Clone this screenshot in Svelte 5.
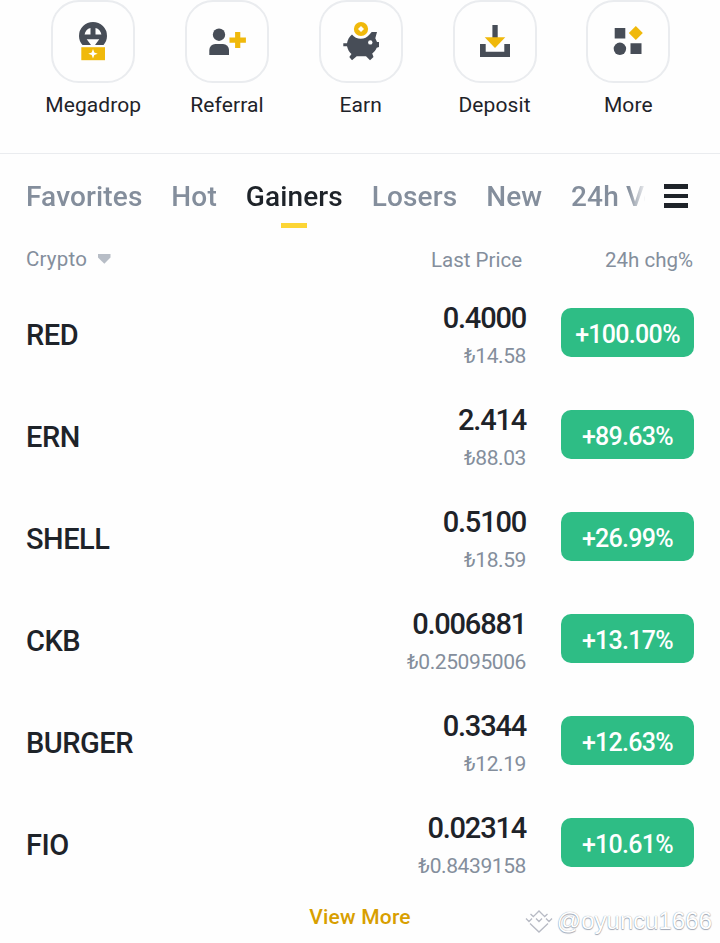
<script lang="ts">
  const shortcuts = ['Megadrop', 'Referral', 'Earn', 'Deposit', 'More'];

  const tabs = ['Favorites', 'Hot', 'Gainers', 'Losers', 'New', '24h Vo'];
  let activeTab = $state('Gainers');

  const coins = [
    { name: 'RED', price: '0.4000', fiat: '₺14.58', change: '+100.00%' },
    { name: 'ERN', price: '2.414', fiat: '₺88.03', change: '+89.63%' },
    { name: 'SHELL', price: '0.5100', fiat: '₺18.59', change: '+26.99%' },
    { name: 'CKB', price: '0.006881', fiat: '₺0.25095006', change: '+13.17%' },
    { name: 'BURGER', price: '0.3344', fiat: '₺12.19', change: '+12.63%' },
    { name: 'FIO', price: '0.02314', fiat: '₺0.8439158', change: '+10.61%' },
  ];
</script>

<main class="screen">
  <nav class="shortcuts">
    {#each shortcuts as label}
      <a class="shortcut" href="#{label.toLowerCase()}">
        <span class="tile">
          <svg viewBox="0 0 84 83" width="84" height="83" fill="#474d57" aria-hidden="true">
            {#if label === 'Megadrop'}
              <path d="M31.500 45C29.300 42.500 28 39.500 28 36a14 14 0 0 1 28 0c0 3.500-1.300 6.500-3.500 9H44l4.300-5.700H35.700L40 45z" />
              <path fill="#fff" d="M39.500 28c-3.200.7-5.400 3.200-5.900 6.400h5.900zM44.500 28v6.400h5.900c-.5-3.200-2.700-5.700-5.900-6.400z" />
              <path fill="#f0b90b" d="M30.300 47.200H54v13H30.300z" />
              <path fill="#fff" d="m42 49 1.300 3.400 3.400 1.300-3.400 1.300L42 58.400 40.700 55l-3.400-1.300 3.400-1.300z" />
            {:else if label === 'Referral'}
              <circle cx="34" cy="34.700" r="6.200" />
              <path d="M24.300 55v-5a6 6 0 0 1 6-6H38a6 6 0 0 1 6 6v5z" />
              <path fill="#f0b90b" d="M50.100 32h5.200v5.500h5.600v5.300h-5.600V48h-5.200v-5.200h-5.600v-5.300h5.600z" />
            {:else if label === 'Earn'}
              <path d="M24.300 43.300H28c.6-3.700 2.400-6.500 5-8.800a11 11 0 0 0 17.500 0l2.200-2.500H58l-1.700 6.300 1.700 3.700h2V47l-2.300.7c-1 2.300-2.500 4.200-4.500 5.700l1.300 3.600-3.500 3.300-4-4h-9.300l-4.700 4-2.700-3.300 2.200-3c-2.300-2-3.700-4.300-4.500-7.700h-3.700z" />
              <circle cx="51.300" cy="42.400" r="2.200" fill="#fff" />
              <circle cx="42" cy="29" r="7.100" fill="#f0b90b" />
              <path fill="#fff" d="m42 26 3 3-3 3-3-3z" />
            {:else if label === 'Deposit'}
              <path d="M39.400 25h5.300v13h-5.300zM27 44h5.700v7.700h18.600V44H57v13H27z" />
              <path fill="#f0b90b" d="M31.700 37.300h20.600L42 48z" />
            {:else}
              <path d="M28.700 28h10.600v10.500H28.700zM44.500 43.300h11V54h-11z" />
              <path fill="#f0b90b" d="m49.800 26 7 7-7 7-7-7z" />
              <circle cx="33.900" cy="48.800" r="6.200" />
            {/if}
          </svg>
        </span>
        <span class="shortcut-label">{label}</span>
      </a>
    {/each}
  </nav>

  <section class="market">
    <div class="tab-bar">
      <div class="tabs">
        {#each tabs as tab}
          <button class="tab" class:active={tab === activeTab} onclick={() => (activeTab = tab)}>
            {tab}
          </button>
        {/each}
      </div>
      <button class="menu" aria-label="Menu">
        <span></span>
        <span></span>
        <span></span>
      </button>
    </div>

    <div class="columns">
      <span class="col-crypto">
        Crypto
        <svg width="13" height="10" viewBox="0 0 13 10" fill="#b7bdc6" aria-hidden="true">
          <path d="M0 0h12.500v3.500L6.300 9.700 0 3.500z" />
        </svg>
      </span>
      <span class="col-price">Last Price</span>
      <span class="col-change">24h chg%</span>
    </div>

    <ul class="coins">
      {#each coins as coin (coin.name)}
        <li class="coin">
          <span class="name">{coin.name}</span>
          <div class="prices">
            <span class="price">{coin.price}</span>
            <span class="fiat">{coin.fiat}</span>
          </div>
          <span class="change">{coin.change}</span>
        </li>
      {/each}
    </ul>

    <a class="view-more" href="#markets">View More</a>
  </section>

  <div class="watermark">
    <svg width="28" height="24" viewBox="0 0 28 24" aria-hidden="true">
      <path d="m5.500 5 2.800 2.600L14 2l5.700 5.600L22.500 5M1 9.500l3 3 3-3M11 9.500l3 3 3-3M21 9.500l3 3 3-3M5 14.500l9 8.500 9-8.500" />
    </svg>
    <span>@oyuncu1666</span>
  </div>
</main>

<style>
  :global(body) {
    background: #fff;
  }

  .screen {
    position: relative;
    box-sizing: border-box;
    height: 943px;
    overflow: hidden;
    font-family: Roboto, 'Noto Sans', sans-serif;
    color: #1e2329;
    background: #fefefe;
  }

  .shortcuts {
    display: grid;
    grid-template-columns: repeat(5, 1fr);
    box-sizing: border-box;
    height: 154px;
    padding: 0 24.800px 0 26.400px;
    border-bottom: 1px solid #eaecef;
  }

  .shortcut {
    display: flex;
    flex-direction: column;
    align-items: center;
    color: inherit;
    text-decoration: none;
  }

  .tile {
    display: flex;
    align-items: center;
    justify-content: center;
    box-sizing: border-box;
    width: 84px;
    height: 83px;
    border: 2px solid #eaecef;
    border-radius: 28px;
  }

  .tile svg {
    flex: none;
  }

  .shortcut-label {
    margin-top: 8px;
    font-size: 21px;
    line-height: 28px;
    letter-spacing: 0.100px;
  }

  .market {
    padding: 0 26px;
  }

  .tab-bar {
    display: flex;
    height: 78px;
  }

  .tabs {
    display: flex;
    gap: 28.800px;
    width: 619px;
    overflow: hidden;
    mask-image: linear-gradient(to right, #000 602px, transparent 622px);
  }

  .tab {
    display: flex;
    flex: none;
    flex-direction: column;
    align-items: center;
    padding: 25px 0 0;
    border: 0;
    background: none;
    color: #848e9c;
    font: 500 28px/36px Roboto, sans-serif;
    letter-spacing: 0.150px;
    white-space: nowrap;
  }

  .tab.active {
    color: #1e2329;
  }

  .tab.active::after {
    content: '';
    width: 26px;
    height: 5px;
    margin-top: 8px;
    background: #fcd535;
  }

  .menu {
    display: flex;
    flex-direction: column;
    gap: 5px;
    margin: 30px 0 0 19.400px;
    padding: 0;
    border: 0;
    background: none;
  }

  .menu span {
    width: 24px;
    height: 4.600px;
    background: #1e2329;
  }

  .columns {
    display: grid;
    grid-template-columns: 1fr auto 172px;
    height: 50px;
    padding-top: 14px;
    box-sizing: border-box;
    color: #848e9c;
    font-size: 20.500px;
    line-height: 28px;
  }

  .col-crypto {
    display: flex;
    align-items: center;
    gap: 11px;
    height: 26px;
    letter-spacing: 0.200px;
  }

  .col-change {
    padding-right: 1px;
    text-align: right;
  }

  .coins {
    margin: 0;
    padding: 0;
    list-style: none;
  }

  .coin {
    display: grid;
    grid-template-columns: 1fr auto 133px;
    column-gap: 35px;
    align-items: start;
    height: 102px;
  }

  .name {
    padding-top: 35px;
    font-size: 29px;
    font-weight: 500;
    line-height: 36px;
    letter-spacing: -0.500px;
  }

  .prices {
    display: flex;
    flex-direction: column;
    align-items: flex-end;
    padding-top: 18px;
  }

  .price {
    font-size: 29px;
    font-weight: 500;
    line-height: 36px;
    letter-spacing: -1.200px;
  }

  .fiat {
    margin-top: 6px;
    color: #848e9c;
    font-size: 21px;
    line-height: 28px;
    letter-spacing: -0.400px;
  }

  .change {
    margin-top: 26px;
    border-radius: 10px;
    background: #2ebd85;
    color: #fff;
    font-size: 25px;
    font-weight: 500;
    line-height: 54px;
    height: 49px;
    letter-spacing: -0.700px;
    text-align: center;
  }

  .view-more {
    display: block;
    margin-top: 9px;
    color: #d89f00;
    font-size: 21px;
    font-weight: 500;
    line-height: 28px;
    letter-spacing: 0.200px;
    text-align: center;
    text-decoration: none;
  }

  .watermark {
    position: absolute;
    right: 8px;
    bottom: 6px;
    display: flex;
    align-items: center;
    gap: 4px;
    color: #fff;
    font: 24px/32px 'Liberation Sans', sans-serif;
    text-shadow: 0 0 1px #848e9c, 0 1px 1px #a5abb8;
  }

  .watermark path {
    fill: none;
    stroke: #b7bac4;
    stroke-width: 1.300;
  }
</style>
